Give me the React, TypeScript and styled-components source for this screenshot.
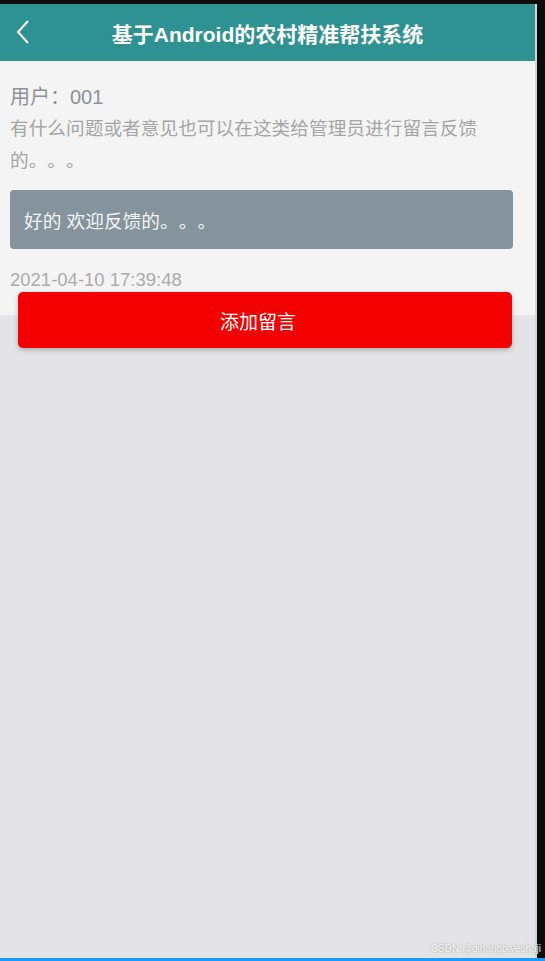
import React from 'react';
import styled, { createGlobalStyle } from 'styled-components';

const GlobalStyle = createGlobalStyle`
  html, body {
    margin: 0;
    padding: 0;
    background: #0c0c0c;
  }
  body {
    font-family: "Liberation Sans", "Noto Sans CJK SC", sans-serif;
    text-spacing-trim: space-all;
  }
`;

const Frame = styled.div`
  position: relative;
  width: 545px;
  height: 961px;
  padding-top: 4px;
  box-sizing: border-box;
  display: flex;
  flex-direction: column;
  background: #0c0c0c;
  overflow: hidden;
`;

const Screen = styled.div`
  width: 535px;
  flex: 1;
  display: flex;
  flex-direction: column;
  background: #e4e4e6;
  border-right: 2px solid #cfd6d6;
`;

const Header = styled.header`
  height: 57px;
  display: flex;
  align-items: center;
  justify-content: center;
  position: relative;
  background: #2f9292;
  color: #fff;
`;

const BackButton = styled.button`
  position: absolute;
  left: 11px;
  top: 14px;
  width: 24px;
  height: 28px;
  padding: 0;
  border: none;
  background: transparent;
  display: flex;
  align-items: center;
  justify-content: center;
`;

const Title = styled.h1`
  margin: 0;
  font-size: 21px;
  font-weight: bold;
`;

const Content = styled.section`
  background: #f4f4f4;
  padding: 20px 22px 19px 10px;
`;

const User = styled.div`
  font-size: 20px;
  line-height: 32px;
  color: #8d9298;
`;

const Message = styled.p`
  margin: 0;
  width: 478px;
  font-size: 18.7px;
  line-height: 32px;
  color: #a5a5a5;
`;

const Reply = styled.div`
  margin-top: 13px;
  height: 59px;
  box-sizing: border-box;
  padding-left: 14px;
  display: flex;
  align-items: center;
  border-radius: 4px;
  background: #84939c;
  color: #f2f4f5;
  font-size: 18.7px;
`;

const Time = styled.div`
  margin-top: 15px;
  font-size: 18.5px;
  line-height: 32px;
  color: #ababab;
`;

const AddButton = styled.button`
  margin: -23px 0 0 18px;
  width: 494px;
  height: 56px;
  padding: 0 14px 0 0;
  border: none;
  border-radius: 5px;
  background: #f30000;
  color: #fff;
  font-family: "Liberation Sans", "Noto Sans CJK SC", sans-serif;
  font-size: 19px;
  box-shadow: 0 2px 5px rgba(0, 0, 0, 0.25);
`;

const BottomLine = styled.div`
  height: 3px;
  background: #1a9bff;
`;

const Watermark = styled.span`
  position: absolute;
  right: 4px;
  bottom: 7px;
  font-size: 10px;
  color: rgba(255, 255, 255, 0.95);
  text-shadow: 0 0 2px rgba(0, 0, 0, 0.4);
`;

export default function App() {
  return (
    <>
      <GlobalStyle />
      <Frame>
        <Screen>
          <Header>
            <BackButton aria-label="返回">
              <svg width="16" height="26" viewBox="0 0 16 26">
                <path d="M13 2 L3 13 L13 24" fill="none" stroke="#f2f7f7" strokeWidth="2" />
              </svg>
            </BackButton>
            <Title>基于Android的农村精准帮扶系统</Title>
          </Header>
          <Content>
            <User>用户：001</User>
            <Message>有什么问题或者意见也可以在这类给管理员进行留言反馈的。。。</Message>
            <Reply>好的 欢迎反馈的。。。</Reply>
            <Time>2021-04-10 17:39:48</Time>
          </Content>
          <AddButton>添加留言</AddButton>
        </Screen>
        <BottomLine />
        <Watermark>CSDN @qihangbiyeshaji</Watermark>
      </Frame>
    </>
  );
}
